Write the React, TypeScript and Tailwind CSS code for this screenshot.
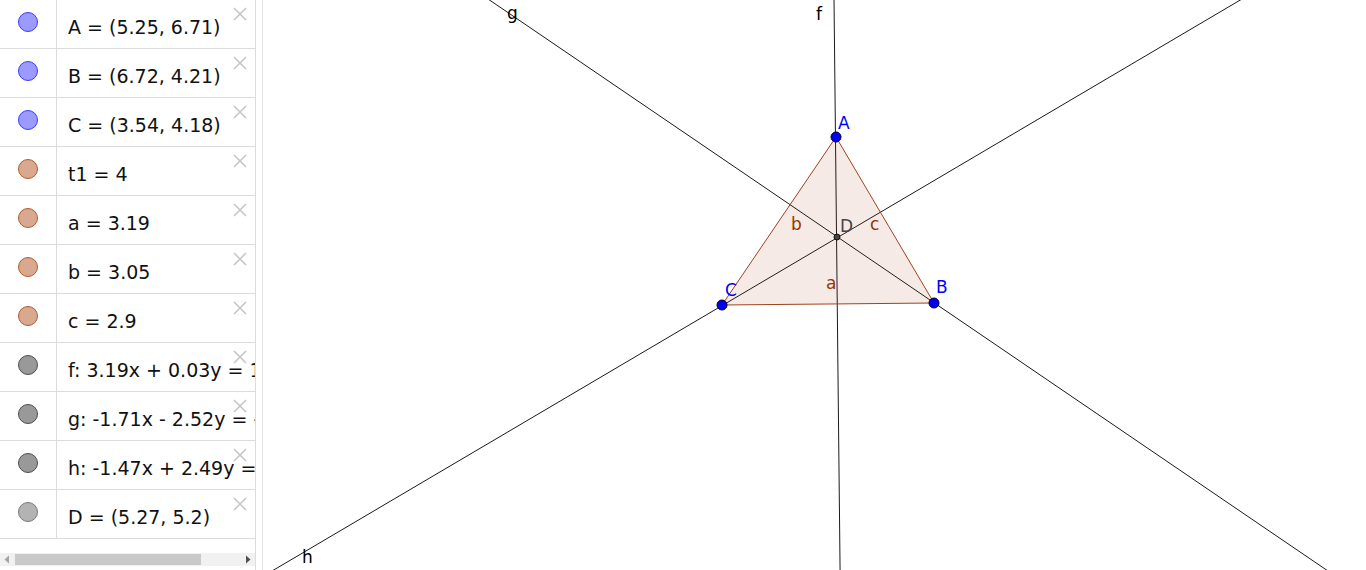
import React from 'react';

type Row = { text: string; marble: string };

const rows: Row[] = [
  { text: 'A = (5.25, 6.71)', marble: 'bg-[#9a9aff] border-[#3b3bff]' },
  { text: 'B = (6.72, 4.21)', marble: 'bg-[#9a9aff] border-[#3b3bff]' },
  { text: 'C = (3.54, 4.18)', marble: 'bg-[#9a9aff] border-[#3b3bff]' },
  { text: 't1 = 4', marble: 'bg-[#d9a98f] border-[#b35a30]' },
  { text: 'a = 3.19', marble: 'bg-[#d9a98f] border-[#b35a30]' },
  { text: 'b = 3.05', marble: 'bg-[#d9a98f] border-[#b35a30]' },
  { text: 'c = 2.9', marble: 'bg-[#d9a98f] border-[#b35a30]' },
  { text: 'f: 3.19x + 0.03y = 16.97', marble: 'bg-[#999999] border-[#4d4d4d]' },
  { text: 'g: -1.71x - 2.52y = -22.12', marble: 'bg-[#999999] border-[#4d4d4d]' },
  { text: 'h: -1.47x + 2.49y = 5.2', marble: 'bg-[#999999] border-[#4d4d4d]' },
  { text: 'D = (5.27, 5.2)', marble: 'bg-[#b3b3b3] border-[#7a7a7a]' },
];

const AlgebraRow: React.FC<{ row: Row }> = ({ row }) => (
  <div className="relative flex h-[49px] border-b border-[#dcdcdc]">
    <div className="w-[57px] shrink-0 border-r border-[#dcdcdc] pl-[18px] pt-[12px]">
      <div className={`h-[20px] w-[20px] rounded-full border ${row.marble}`} />
    </div>
    <div className="whitespace-nowrap pl-[11px] pt-[17px] text-[19px] leading-[20px] text-[#111]">
      {row.text}
    </div>
    {/* delete cross */}
    <svg className="absolute left-[233px] top-[7px]" width="14" height="14" viewBox="0 0 14 14">
      <path d="M1 1 L13 13 M13 1 L1 13" stroke="#c4c4c4" strokeWidth="1.5" fill="none" />
    </svg>
  </div>
);

const Scrollbar = () => (
  <div className="mt-[14px] flex h-[13px] items-center bg-[#f1f1f1]">
    <svg className="ml-[4px]" width="6" height="9" viewBox="0 0 6 9">
      <path d="M5 0.5 L0.5 4.5 L5 8.5 Z" fill="#a3a3a3" />
    </svg>
    <div className="ml-[5px] h-[11px] w-[186px] bg-[#c9c9c9] bg-[radial-gradient(#b8b8b8_0.6px,transparent_0.8px)] bg-[length:8px_4px]" />
    <div className="flex-1" />
    <svg className="mr-[4px]" width="6" height="9" viewBox="0 0 6 9">
      <path d="M1 0.5 L5.5 4.5 L1 8.5 Z" fill="#505050" />
    </svg>
  </div>
);

const Canvas = () => (
  <svg width="1103" height="570" viewBox="263 0 1103 570" className="block text-[17px]">
    {/* lines f, g, h */}
    <line x1="834" y1="-2" x2="840.1" y2="572" stroke="#1a1a1a" strokeWidth="1" />
    <line x1="488" y1="-1" x2="1328" y2="571" stroke="#1a1a1a" strokeWidth="1" />
    <line x1="1242" y1="-1" x2="272" y2="571" stroke="#1a1a1a" strokeWidth="1" />
    {/* triangle */}
    <polygon points="836,137 934,303 722,305" fill="rgba(153,51,0,0.1)" stroke="#a0421a" strokeWidth="1" />
    {/* points */}
    <circle cx="836" cy="137" r="5" fill="#0000ee" stroke="#000033" strokeWidth="1" />
    <circle cx="934" cy="303" r="5" fill="#0000ee" stroke="#000033" strokeWidth="1" />
    <circle cx="722" cy="305" r="5" fill="#0000ee" stroke="#000033" strokeWidth="1" />
    <circle cx="837" cy="237" r="3" fill="#444" stroke="#111" strokeWidth="1" />
    {/* labels */}
    <text x="838" y="129" fill="#0000ff">A</text>
    <text x="936" y="293" fill="#0000ff">B</text>
    <text x="725" y="296" fill="#0000ff">C</text>
    <text x="840" y="232" fill="#444444">D</text>
    <text x="826" y="289" fill="#993300">a</text>
    <text x="791" y="230" fill="#993300">b</text>
    <text x="870" y="230" fill="#993300">c</text>
    <text x="816" y="20" fill="#000">f</text>
    <text x="507" y="19" fill="#000">g</text>
    <text x="302" y="563" fill="#000">h</text>
  </svg>
);

export default function App() {
  return (
    <div className="flex h-[570px] w-[1366px] overflow-hidden bg-white font-['DejaVu_Sans',sans-serif]">
      <div className="w-[256px] shrink-0 overflow-hidden border-r border-[#dcdcdc]">
        {rows.map((r) => (
          <AlgebraRow key={r.text} row={r} />
        ))}
        <Scrollbar />
      </div>
      <div className="w-[7px] shrink-0 border-r border-[#e4e4e4]" />
      <div className="flex-1">
        <Canvas />
      </div>
    </div>
  );
}
